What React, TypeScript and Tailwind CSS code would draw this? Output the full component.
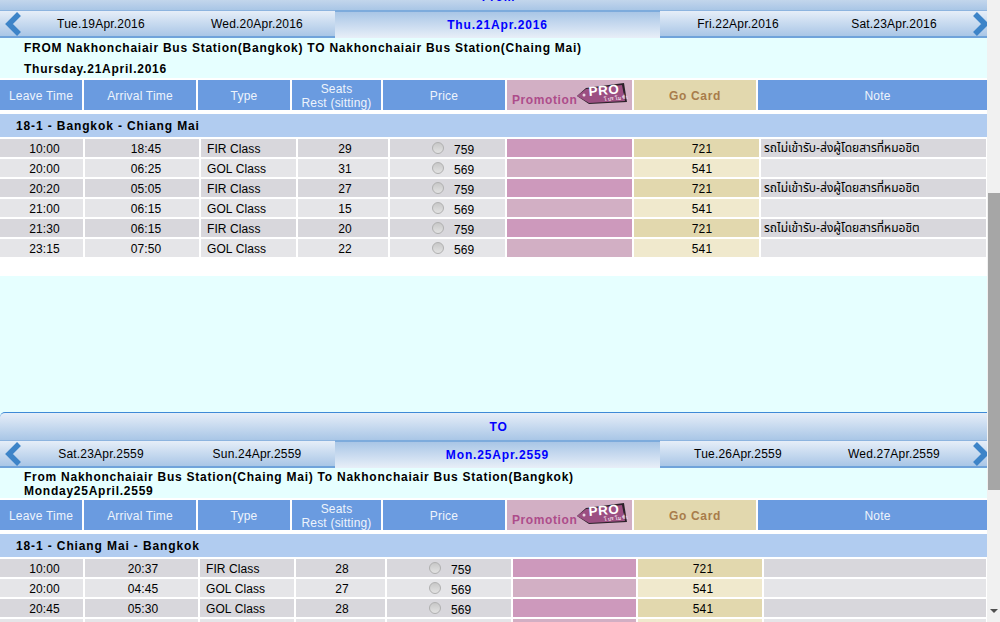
const font = { fontFamily: '"Liberation Sans", "Noto Sans Thai", "DejaVu Sans", sans-serif' };

type Row = { leave: string; arrive: string; type: string; seats: string; price: string; go: string; note?: string };
type Pads = { cols: string; arrive: string; seats: string; go: string };

const NOTE = "รถไม่เข้ารับ-ส่งผู้โดยสารที่หมอชิต";

const outbound: Row[] = [
  { leave: "10:00", arrive: "18:45", type: "FIR Class", seats: "29", price: "759", go: "721", note: NOTE },
  { leave: "20:00", arrive: "06:25", type: "GOL Class", seats: "31", price: "569", go: "541" },
  { leave: "20:20", arrive: "05:05", type: "FIR Class", seats: "27", price: "759", go: "721", note: NOTE },
  { leave: "21:00", arrive: "06:15", type: "GOL Class", seats: "15", price: "569", go: "541" },
  { leave: "21:30", arrive: "06:15", type: "FIR Class", seats: "20", price: "759", go: "721", note: NOTE },
  { leave: "23:15", arrive: "07:50", type: "GOL Class", seats: "22", price: "569", go: "541" },
];

// the fourth row is only just visible at the bottom of the window
const inbound: Row[] = [
  { leave: "10:00", arrive: "20:37", type: "FIR Class", seats: "28", price: "759", go: "721" },
  { leave: "20:00", arrive: "04:45", type: "GOL Class", seats: "27", price: "569", go: "541" },
  { leave: "20:45", arrive: "05:30", type: "GOL Class", seats: "28", price: "569", go: "541" },
  { leave: "", arrive: "", type: "", seats: "", price: "", go: "" },
];

function Chevron({ right }: { right?: boolean }) {
  return (
    <svg width="23" height="28" viewBox="0 0 23 28" className="shrink-0">
      <polyline
        points={right ? "3,4 13,14 3,24" : "19,4 9,14 19,24"}
        fill="none"
        stroke="#3d84c8"
        strokeWidth="5.5"
      />
    </svg>
  );
}

function DateTabs({ days, active }: { days: string[]; active: string }) {
  const side =
    "flex h-[28px] items-center border-t border-[#8db4df] border-b-2 border-b-[#6fa3da] bg-gradient-to-b from-[#e6eef8] to-[#a9c6e6] text-[12px] tracking-[0.2px] text-black";
  return (
    <div className="flex h-[28px] w-full overflow-hidden">
      <div className={`${side} w-[335px]`}>
        <Chevron />
        <span className="w-[156px] pt-[1px] text-center">{days[0]}</span>
        <span className="w-[156px] pt-[1px] text-center">{days[1]}</span>
      </div>
      <div className="flex h-[28px] w-[325px] items-center justify-center border-t-2 border-[#7dabdc] bg-gradient-to-b from-[#a9c6e6] to-[#e8eff8] text-[12px] font-bold tracking-[0.85px] text-[#0000ff]">
        {active}
      </div>
      <div className={`${side} w-[327px]`}>
        <span className="w-[156px] pt-[1px] text-center">{days[2]}</span>
        <span className="w-[156px] pt-[1px] text-center">{days[3]}</span>
        <div className="w-[15px] overflow-hidden">
          <Chevron right />
        </div>
      </div>
    </div>
  );
}

function ProTag() {
  return (
    <svg width="52" height="24" viewBox="0 0 52 24" className="mb-[4px] -ml-[1px] shrink-0">
      <polygon points="1,14 10,6 48,1 51,20 13,22" fill="#2a2029" />
      <polygon points="1,14 10,7 46,3 49,19 13,21" fill="#9c4f82" />
      <circle cx="8" cy="13" r="1.5" fill="#e9d5e1" />
      <text
        x="13"
        y="14"
        fontFamily="Liberation Sans, sans-serif"
        fontSize="13"
        fontWeight="700"
        fill="#ffffff"
        textLength="31"
        lengthAdjust="spacingAndGlyphs"
        transform="rotate(-5 13 14)"
      >
        PRO
      </text>
      <text x="28" y="19" fontFamily="Liberation Sans, sans-serif" fontSize="5" fill="#e9d5e1" transform="rotate(-5 28 19)">
        โปรโมชั่น
      </text>
    </svg>
  );
}

function HeaderRow() {
  const cell = "flex items-center justify-center bg-[#6a9be0] text-[12px] tracking-[0.2px] text-[#eef4fc]";
  return (
    <div className="grid h-[30px] grid-cols-[82px_112px_92px_89px_122px_125px_122px_229px] grid-rows-[30px] gap-x-[2px]">
      <div className={`${cell} pt-[1px]`}>Leave Time</div>
      <div className={`${cell} pt-[1px]`}>Arrival Time</div>
      <div className={`${cell} pt-[1px]`}>Type</div>
      <div className={`${cell} flex-col pt-[2px] leading-[14px]`}>
        <span>Seats</span>
        <span>Rest (sitting)</span>
      </div>
      <div className={`${cell} pt-[1px]`}>Price</div>
      <div className="flex items-end bg-[#d2afc4] pl-[5px] text-[12px] font-bold tracking-[0.6px] text-[#ad4c8a]">
        <span className="mb-[1px]">Promotion</span>
        <ProTag />
      </div>
      <div className="flex items-center justify-center bg-[#e2d8ae] pt-[1px] text-[12px] font-bold tracking-[0.7px] text-[#a87c4a]">
        Go Card
      </div>
      <div className={`${cell} pl-[10px] pt-[1px]`}>Note</div>
    </div>
  );
}

function Radio() {
  return (
    <span className="mr-[10px] mt-[-2px] block h-[12px] w-[12px] rounded-full border border-[#b0b0b0] bg-gradient-to-b from-[#c8c8c8] to-[#e2e2e2]" />
  );
}

function DataRows({ rows, pads }: { rows: Row[]; pads: Pads }) {
  return (
    <div className="flex flex-col gap-y-[2px]">
      {rows.map((r, i) => {
        const dark = i % 2 === 0;
        const plain = dark ? "bg-[#d8d7dc]" : "bg-[#e5e5e8]";
        const center = `${plain} flex items-center justify-center pt-[1px]`;
        return (
          <div
            key={i}
            className={`grid h-[18px] grid-rows-[18px] gap-x-[2px] text-[12px] leading-[14px] tracking-[0.1px] text-black ${pads.cols}`}
          >
            <div className={`${center} pl-[6px]`}>{r.leave}</div>
            <div className={`${center} ${pads.arrive}`}>{r.arrive}</div>
            <div className={`${plain} flex items-center pl-[6px] pt-[1px]`}>{r.type}</div>
            <div className={`${center} ${pads.seats}`}>{r.seats}</div>
            <div className={`${plain} flex items-center pl-[42px] pt-[1px]`}>
              {r.price && <Radio />}
              <span className="pt-[3px]">{r.price}</span>
            </div>
            <div className={dark ? "bg-[#cd99bc]" : "bg-[#d2afc4]"} />
            <div className={`flex items-center justify-center pt-[1px] ${pads.go} ${dark ? "bg-[#e2d8ae]" : "bg-[#f0e9cd]"}`}>{r.go}</div>
            <div className={`${plain} flex items-center overflow-hidden whitespace-nowrap pl-[3px] tracking-normal`}>{r.note}</div>
          </div>
        );
      })}
    </div>
  );
}

function TripTable({ route, rows, pads }: { route: string; rows: Row[]; pads: Pads }) {
  return (
    <div className="bg-white pt-[2px]">
      <HeaderRow />
      <div className="mb-[2px] mt-[4px] flex h-[23px] items-center bg-[#b1ccf0] pl-[16px] text-[12px] font-bold tracking-[0.88px] text-black">
        {route}
      </div>
      <DataRows rows={rows} pads={pads} />
    </div>
  );
}

export default function App() {
  return (
    <div className="flex h-[622px] w-[1000px] overflow-hidden bg-[#e6ffff]" style={font}>
      <div className="w-[987px] shrink-0">
        {/* top of the FROM block is scrolled out of view */}
        <div className="h-[10px] overflow-hidden bg-gradient-to-b from-[#c3d6ec] to-[#a9c6e6] pl-[10px] text-center text-[12px] font-bold tracking-[0.85px] text-[#0000ff]">
          <div className="-mt-[10px] leading-[15px]">From</div>
        </div>
        <DateTabs
          days={["Tue.19Apr.2016", "Wed.20Apr.2016", "Fri.22Apr.2016", "Sat.23Apr.2016"]}
          active="Thu.21Apr.2016"
        />
        <div className="h-[40px] pl-[24px] text-[12px] font-bold leading-[21px] tracking-[0.75px] text-black">
          <div>FROM Nakhonchaiair Bus Station(Bangkok) TO Nakhonchaiair Bus Station(Chaing Mai)</div>
          <div>Thursday.21April.2016</div>
        </div>
        <div className="bg-white pb-[19px]">
          <TripTable
            route="18-1 - Bangkok - Chiang Mai"
            rows={outbound}
            pads={{
              cols: "grid-cols-[83px_114px_95px_90px_115px_125px_125px_225px]",
              arrive: "pl-[8px]",
              seats: "pl-[4px]",
              go: "pl-[11px]",
            }}
          />
        </div>
        <div className="h-[136px]" />
        <div className="h-[28px] rounded-tl-[5px] border-t border-[#3f8ad6] bg-gradient-to-b from-[#e6eef8] to-[#a9c6e6] pl-[10px] text-center text-[12px] font-bold leading-[29px] tracking-[0.85px] text-[#0000ff]">
          TO
        </div>
        <DateTabs
          days={["Sat.23Apr.2559", "Sun.24Apr.2559", "Tue.26Apr.2559", "Wed.27Apr.2559"]}
          active="Mon.25Apr.2559"
        />
        <div className="h-[30px] pl-[24px] pt-[2px] text-[12px] font-bold leading-[14px] tracking-[0.75px] text-black">
          <div>From Nakhonchaiair Bus Station(Chaing Mai) To Nakhonchaiair Bus Station(Bangkok)</div>
          <div>Monday25April.2559</div>
        </div>
        <TripTable
          route="18-1 - Chiang Mai - Bangkok"
          rows={inbound}
          pads={{
            cols: "grid-cols-[83px_113px_94px_89px_124px_123px_124px_222px]",
            arrive: "pl-[3px]",
            seats: "pl-[3px]",
            go: "pl-[6px]",
          }}
        />
      </div>
      <div className="flex w-[13px] shrink-0 flex-col bg-[#f1f1f1] pl-[1px]">
        <div className="mt-[193px] h-[297px] bg-[#a6a6a6]" />
        <div className="mt-[119px] flex justify-center">
          <div className="h-0 w-0 border-x-[4px] border-t-[4px] border-x-transparent border-t-[#505050]" />
        </div>
      </div>
    </div>
  );
}
